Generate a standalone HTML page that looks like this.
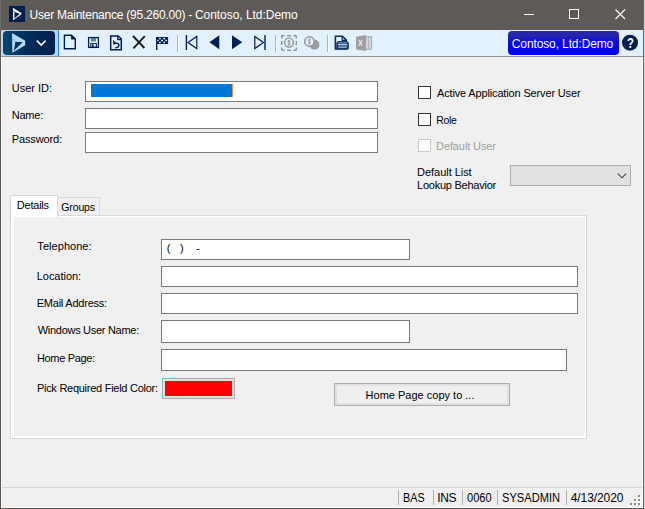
<!DOCTYPE html>
<html lang="en">
<head>
<meta charset="utf-8">
<title>User Maintenance (95.260.00) - Contoso, Ltd:Demo</title>
<style>
html,body{margin:0;padding:0;}
body{width:645px;height:509px;overflow:hidden;background:#d6d4d2;position:relative;font-family:"Liberation Sans",sans-serif;}
.a{position:absolute;box-sizing:border-box;}
.t{position:absolute;transform-origin:0 50%;white-space:pre;line-height:30px;height:30px;font-family:"Liberation Sans",sans-serif;}
.inp{position:absolute;box-sizing:border-box;background:#fff;border:1px solid #7a7a7a;}
.cb{position:absolute;box-sizing:border-box;width:13px;height:13px;background:#fff;border:1px solid #333;}
.sep{position:absolute;width:1px;background:#b0b0b0;top:490px;height:15px;}
</style>
</head>
<body>
<!-- window frame -->
<div class="a" id="win" style="left:0;top:0;width:644px;height:509px;background:#f0f0f0;"></div>
<!-- title bar -->
<div class="a" id="titlebar" style="left:0;top:0;width:644px;height:30px;background:#5e5a57;"></div>
<!-- toolbar -->
<div class="a" id="toolbar" style="left:1px;top:30px;width:642px;height:26px;background:#e3f0fe;"></div>
<div class="a" style="left:1px;top:56px;width:642px;height:1px;background:#9097a1;"></div>
<!-- dropdown button highlight -->
<div class="a" style="left:1px;top:30px;width:57px;height:26px;background:#b0d7fa;"></div>
<div class="a" style="left:58px;top:30px;width:1px;height:26px;background:#1f8ae8;"></div>
<div class="a" style="left:3px;top:31px;width:52px;height:24px;border-radius:4px;background:linear-gradient(90deg,#004872 0%,#002d5c 45%,#002050 100%);"></div>
<!-- company button -->
<div class="a" style="left:508px;top:31px;width:111px;height:24px;border-radius:4px;background:linear-gradient(180deg,#2a2aa6 0%,#2424ae 22%,#0606f2 50%,#0000ff 100%);"></div>

<!-- icons svg -->
<svg class="a" style="left:0;top:0" width="645" height="57" viewBox="0 0 645 57">
  <!-- title icon -->
  <rect x="9" y="6" width="16" height="16" fill="#001f50"/>
  <path d="M12.9,7.8 L21.4,13 L21.4,14.2 L13.1,20.2 Z" fill="#fff"/>
  <path d="M14.5,12.1 L19.9,13.7 L14.3,18.6 Z" fill="#001f50"/>
  <path d="M12.9,10.8 L15,12.5" stroke="#001f50" stroke-width="0.7" fill="none"/>
  <!-- window controls -->
  <rect x="524" y="14" width="10" height="1" fill="#fff"/>
  <rect x="569.5" y="9.5" width="9" height="9" fill="none" stroke="#fff" stroke-width="1"/>
  <path d="M615.5,9.5 L625,19 M625,9.5 L615.5,19" stroke="#fff" stroke-width="1.1" fill="none"/>
  <!-- dropdown logo -->
  <path d="M12,33.1 L25.2,40.7 L25.2,45.2 L12.3,52.8 Z" fill="#b3d9f7"/>
  <path d="M15.4,41.8 L22.7,42.3 L13.9,50.8 Z" fill="#00305e"/>
  <path d="M12,38.2 L15.4,41.8" stroke="#6fa8dc" stroke-width="0.8" fill="none"/>
  <path d="M36.8,40.6 L41.2,45 L45.6,40.6" stroke="#fff" stroke-width="1.6" fill="none"/>
  <g fill="none" stroke="#002050" stroke-width="1.4">
    <!-- new -->
    <path d="M64.4,35.2 H71.4 L75.3,39.1 V48.7 H64.4 Z"/>
    <path d="M71.4,35.2 V39.1 H75.3 Z" fill="#002050" stroke-width="0.8"/>
    <!-- save -->
    <rect x="88.6" y="37.6" width="9.8" height="9.8" stroke-width="1.3"/>
    <!-- save undo -->
    <path d="M110.7,35.9 H118.2 L121.3,39 V49.7 H110.7 Z" stroke-width="1.5"/>
    <path d="M117.8,36.2 V39.6 H121.2" stroke-width="1.3"/>
    <path d="M115,43.3 Q119.3,42.8 118.9,45.6 Q118.4,47.6 116,47.7" stroke-width="1.5" stroke-linecap="round"/>
    <!-- first -->
    <path d="M186.4,35 V50" stroke-width="1.4"/>
    <path d="M188,42.5 L196.8,36.4 V48.6 Z" stroke-width="1.2"/>
    <!-- last -->
    <path d="M265,35 V50" stroke-width="1.4"/>
    <path d="M263.5,42.5 L254.8,36.4 V48.6 Z" stroke-width="1.2"/>
  </g>
  <!-- save inner -->
  <rect x="91" y="38" width="5" height="3.4" fill="#5c7aa3"/>
  <rect x="90.8" y="43.6" width="5.6" height="3.6" fill="none" stroke="#002050" stroke-width="1"/>
  <rect x="92" y="44.4" width="1.6" height="2.6" fill="#002050"/>
  <!-- undo arrow head -->
  <path d="M113.1,40.1 L116.6,43.4 L113.3,44.9 Z" fill="#002050"/>
  <!-- X -->
  <path d="M133,36 L144.4,48 M144.8,36.2 L133.4,48.4" stroke="#1c1c1c" stroke-width="1.9" fill="none"/>
  <!-- flag -->
  <rect x="156" y="37" width="1.4" height="13" fill="#002050"/>
  <rect x="156" y="37" width="12.1" height="7.1" rx="0.8" fill="#002050"/>
  <g fill="#e2eefa">
    <rect x="159.1" y="37.8" width="1.7" height="1.5"/><rect x="163.3" y="37.8" width="1.7" height="1.5"/>
    <rect x="157.2" y="39.8" width="1.4" height="1.5"/><rect x="161.2" y="39.8" width="1.7" height="1.5"/><rect x="165.4" y="39.8" width="1.7" height="1.5"/>
    <rect x="159.1" y="41.8" width="1.7" height="1.4"/><rect x="163.3" y="41.8" width="1.7" height="1.4"/>
  </g>
  <!-- separators -->
  <g>
    <rect x="177" y="35" width="1" height="17" fill="#b4b4b4"/><rect x="178" y="35" width="1" height="17" fill="#f7fbff"/>
    <rect x="275" y="35" width="1" height="17" fill="#b4b4b4"/><rect x="276" y="35" width="1" height="17" fill="#f7fbff"/>
    <rect x="327" y="35" width="1" height="17" fill="#b4b4b4"/><rect x="328" y="35" width="1" height="17" fill="#f7fbff"/>
  </g>
  <!-- prev / next -->
  <path d="M209.4,42.2 L219.3,35.2 V49.2 Z" fill="#002050"/>
  <path d="M242.2,42.2 L232,35.2 V49.2 Z" fill="#002050"/>
  <!-- dashed currency -->
  <rect x="281.7" y="35.7" width="14.6" height="14.6" fill="none" stroke="#929292" stroke-width="1.4" stroke-dasharray="2.8,2.6,3.8,2.6,2.8,0"/>
  <circle cx="289" cy="42.6" r="4.5" fill="none" stroke="#929292" stroke-width="1.3"/>
  <path transform="translate(0,-0.2)" d="M290.4,41.4 Q289,40.4 288,41.4 Q287.4,42.6 289,42.9 Q290.8,43.4 290,44.6 Q288.8,45.4 287.6,44.4 M289,40 V46" fill="none" stroke="#9b9b9b" stroke-width="1"/>
  <!-- coins -->
  <circle cx="314.5" cy="44.7" r="5" fill="#9c9c9c"/>
  <circle cx="309.4" cy="41.5" r="4.7" fill="#e3f0fe" stroke="#959595" stroke-width="1.5"/>
  <path d="M310.8,39.9 Q309.4,38.9 308.4,39.9 Q307.8,41.1 309.4,41.4 Q311.2,41.9 310.4,43.1 Q309.2,43.9 308,42.9 M309.4,38.5 V44.5" fill="none" stroke="#a0a0a0" stroke-width="1"/>
  <!-- printer -->
  <path d="M335.4,36.2 H342.4 L346.3,40.1 V49 H335.4 Z" fill="#e3f0fe" stroke="#0f2f63" stroke-width="1.6"/>
  <path d="M342.2,36.4 V40.3 H346.2" fill="none" stroke="#0f2f63" stroke-width="1.3"/>
  <path d="M338,41 H347 L348.9,43 V48.2 Q348.9,49.4 347.7,49.4 H337.4 Q336.2,49.4 336.2,48.2 V43 Z" fill="#17386c"/>
  <rect x="338.4" y="42.5" width="8.4" height="0.9" fill="#9db7d8"/>
  <rect x="337.8" y="44.2" width="9.6" height="1.1" fill="#dce9f7"/>
  <rect x="338.4" y="46.6" width="8.4" height="1.1" fill="#c5d8ee"/>
  <!-- excel -->
  <rect x="365" y="36.7" width="6.6" height="12.6" fill="#d3d8dd" stroke="#a8a8a8" stroke-width="1"/>
  <path d="M368.4,37 V49" stroke="#b0b0b0" stroke-width="1"/>
  <path d="M356,36.7 L366,35 V50.9 L356,49.5 Z" fill="#a0a0a0"/>
  <path d="M358.8,40 L362.2,45.6 M362.2,40 L358.8,45.6" stroke="#ececec" stroke-width="1.1" fill="none"/>
  <!-- help -->
  <circle cx="630" cy="42.7" r="8" fill="#002050"/>
</svg>

<!-- top inputs -->
<div class="inp" style="left:85px;top:81px;width:293px;height:21px;"></div>
<div class="a" style="left:91px;top:84px;width:141px;height:13px;background:#0078d7;"></div>
<div class="a" style="left:232px;top:84px;width:1px;height:13px;background:#ff8d30;"></div>
<div class="inp" style="left:85px;top:108px;width:293px;height:21px;"></div>
<div class="inp" style="left:85px;top:132px;width:293px;height:21px;"></div>
<!-- checkboxes -->
<div class="cb" style="left:418px;top:86px;"></div>
<div class="cb" style="left:418px;top:113px;"></div>
<div class="cb" style="left:418px;top:139px;border-color:#cccccc;"></div>
<!-- combo -->
<div class="a" style="left:510px;top:165px;width:121px;height:21px;background:#e1e1e1;border:1px solid #adadad;"></div>
<svg class="a" style="left:612px;top:168px" width="20" height="16" viewBox="0 0 20 16"><path d="M5.8,5.6 L10,9.8 L14.2,5.6" fill="none" stroke="#404040" stroke-width="1.1"/></svg>

<!-- tab control -->
<div class="a" style="left:10px;top:215px;width:577px;height:224px;background:#fff;border:1px solid #d9d9d9;"></div>
<div class="a" style="left:14px;top:217px;width:571px;height:219px;background:#f0f0f0;"></div>
<!-- groups tab -->
<div class="a" style="left:57px;top:197px;width:43px;height:19px;background:#f0f0f0;border:1px solid #d9d9d9;"></div>
<!-- details tab -->
<div class="a" style="left:10px;top:195px;width:48px;height:22px;background:#fff;border:1px solid #d9d9d9;border-bottom:none;"></div>

<!-- detail inputs -->
<div class="inp" style="left:161px;top:239px;width:249px;height:21px;"></div>
<div class="inp" style="left:161px;top:266px;width:417px;height:21px;"></div>
<div class="inp" style="left:161px;top:293px;width:417px;height:21px;"></div>
<div class="inp" style="left:161px;top:320px;width:249px;height:23px;"></div>
<div class="inp" style="left:161px;top:349px;width:406px;height:22px;"></div>
<!-- color button -->
<div class="a" style="left:162px;top:378px;width:73px;height:21px;background:#e1e1e1;border:1px solid #adadad;"></div>
<div class="a" style="left:165px;top:381px;width:67px;height:15px;background:#ff0000;"></div>
<!-- button -->
<div class="a" style="left:334px;top:383px;width:176px;height:23px;background:#e1e1e1;border:1px solid #adadad;"></div>
<div class="a" style="left:337px;top:386px;width:170px;height:17px;background:#efefef;"></div>

<!-- status bar -->
<div class="a" style="left:1px;top:487px;width:642px;height:1px;background:#d7d7d7;"></div>
<div class="sep" style="left:398px;"></div>
<div class="sep" style="left:433px;"></div>
<div class="sep" style="left:462px;"></div>
<div class="sep" style="left:497px;"></div>
<div class="sep" style="left:566px;"></div>
<svg class="a" style="left:628px;top:493px" width="14" height="14" viewBox="0 0 14 14">
 <g fill="#ffffff"><rect x="11" y="3" width="2" height="2"/><rect x="7" y="7" width="2" height="2"/><rect x="11" y="7" width="2" height="2"/><rect x="3" y="11" width="2" height="2"/><rect x="7" y="11" width="2" height="2"/><rect x="11" y="11" width="2" height="2"/></g>
 <g fill="#8a8a8a"><rect x="10" y="2" width="2" height="2"/><rect x="6" y="6" width="2" height="2"/><rect x="10" y="6" width="2" height="2"/><rect x="2" y="10" width="2" height="2"/><rect x="6" y="10" width="2" height="2"/><rect x="10" y="10" width="2" height="2"/></g>
</svg>

<!-- frame edges -->
<div class="a" style="left:642px;top:57px;width:1px;height:451px;background:#fbfbfb;"></div>
<div class="a" style="left:1px;top:507px;width:642px;height:1px;background:#fbfbfb;"></div>
<div class="a" style="left:0;top:0;width:1px;height:30px;background:#6e6a67;"></div>
<div class="a" style="left:0;top:30px;width:1px;height:479px;background:#5c5855;"></div>
<div class="a" style="left:1px;top:57px;width:1px;height:451px;background:#f9f9f9;"></div>
<div class="a" style="left:643px;top:0;width:1px;height:509px;background:#6a6664;"></div>
<div class="a" style="left:0;top:508px;width:644px;height:1px;background:#5a5654;"></div>

<span id="t_title" class="t" style="left:29.47px;top:-0.16px;font-size:12px;color:#fff;letter-spacing:-0.227px;">User Maintenance (95.260.00) -</span>
<span id="t_title2" class="t" style="left:194.89px;top:-0.16px;font-size:12px;color:#fff;letter-spacing:-0.036px;">Contoso, Ltd:Demo</span>
<span id="t_comp" class="t" style="left:511.79px;top:28.84px;font-size:12px;color:#fff;letter-spacing:-0.117px;">Contoso, Ltd:Demo</span>
<span id="t_uid" class="t" style="left:11.75px;top:73.19px;font-size:11px;color:#000;letter-spacing:0.001px;">User ID:</span>
<span id="t_name" class="t" style="left:11.70px;top:100.19px;font-size:11px;color:#000;letter-spacing:-0.225px;">Name:</span>
<span id="t_pw" class="t" style="left:11.70px;top:124.19px;font-size:11px;color:#000;letter-spacing:-0.107px;">Password:</span>
<span id="t_act" class="t" style="left:436.98px;top:78.19px;font-size:11px;color:#000;letter-spacing:-0.150px;">Active Application Server User</span>
<span id="t_role" class="t" style="left:436.14px;top:105.36px;font-size:10.5px;color:#000;letter-spacing:-0.294px;">Role</span>
<span id="t_du" class="t" style="left:436.10px;top:131.19px;font-size:11px;color:#a0a0a0;letter-spacing:-0.114px;">Default User</span>
<span id="t_dl" class="t" style="left:417.10px;top:157.19px;font-size:11px;color:#000;letter-spacing:-0.041px;">Default List</span>
<span id="t_lb" class="t" style="left:417.10px;top:170.19px;font-size:11px;color:#000;letter-spacing:-0.248px;">Lookup Behavior</span>
<span id="t_det" class="t" style="left:16.80px;top:190.19px;font-size:11px;color:#000;letter-spacing:-0.221px;">Details</span>
<span id="t_grp" class="t" style="left:61.27px;top:192.36px;font-size:10.5px;color:#000;letter-spacing:-0.126px;">Groups</span>
<span id="t_tel" class="t" style="left:37.35px;top:231.19px;font-size:11px;color:#000;letter-spacing:0.047px;">Telephone:</span>
<span id="t_loc" class="t" style="left:36.70px;top:261.19px;font-size:11px;color:#000;letter-spacing:-0.019px;">Location:</span>
<span id="t_em" class="t" style="left:36.70px;top:288.19px;font-size:11px;color:#000;letter-spacing:-0.221px;">EMail Address:</span>
<span id="t_win" class="t" style="left:37.75px;top:315.19px;font-size:11px;color:#000;letter-spacing:-0.289px;">Windows User Name:</span>
<span id="t_hp" class="t" style="left:36.90px;top:343.19px;font-size:11px;color:#000;letter-spacing:-0.328px;">Home Page:</span>
<span id="t_pick" class="t" style="left:36.90px;top:373.19px;font-size:11px;color:#000;letter-spacing:-0.267px;">Pick Required Field Color:</span>
<span id="t_btn" class="t" style="left:365.60px;top:379.69px;font-size:11px;color:#000;letter-spacing:0.003px;">Home Page copy to ...</span>
<span id="t_bas" class="t" style="left:402.62px;top:483.24px;font-size:12px;color:#000;transform:scaleX(0.8986);">BAS</span>
<span id="t_ins" class="t" style="left:437.29px;top:483.24px;font-size:12px;color:#000;letter-spacing:-0.379px;">INS</span>
<span id="t_0060" class="t" style="left:466.57px;top:483.24px;font-size:12px;color:#000;transform:scaleX(0.9237);">0060</span>
<span id="t_sys" class="t" style="left:501.90px;top:483.24px;font-size:12px;color:#000;transform:scaleX(0.9254);">SYSADMIN</span>
<span id="t_date" class="t" style="left:570.72px;top:483.24px;font-size:12px;color:#000;letter-spacing:-0.081px;">4/13/2020</span>
<span id="t_q" class="t" style="left:626.54px;top:28.15px;font-size:14px;color:#fff;transform:scaleX(0.8000);font-weight:bold;">?</span>
<span id="t_p1" class="t" style="left:166.71px;top:233.19px;font-size:11px;color:#000;">(</span>
<span id="t_p2" class="t" style="left:179.97px;top:233.19px;font-size:11px;color:#000;">)</span>
<span id="t_p3" class="t" style="left:196.26px;top:233.19px;font-size:11px;color:#000;">-</span>
</body>
</html>
